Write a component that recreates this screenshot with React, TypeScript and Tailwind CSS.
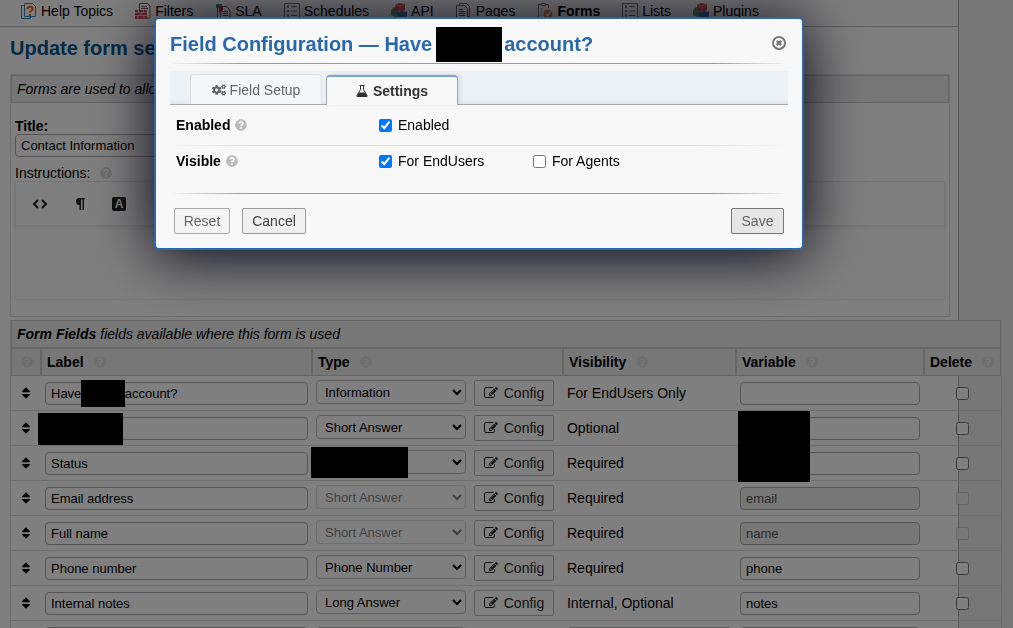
import type { ReactNode } from 'react'
import { FaCogs, FaQuestionCircle, FaSort } from 'react-icons/fa'

type Field = {
  label: string
  type: string
  visibility: string
  variable: string
  locked?: boolean
  hidden?: { label?: string; type?: string; variable?: string }
}

const fields: Field[] = [
  {
    label: 'Have            account?',
    type: 'Information',
    visibility: 'For EndUsers Only',
    variable: '',
    hidden: { label: 'left-10 top-1 h-[27px] w-11' },
  },
  {
    label: '',
    type: 'Short Answer',
    visibility: 'Optional',
    variable: '',
    hidden: { label: '-left-[3px] top-[2px] h-8 w-[85px]', variable: 'left-[2px] top-0 h-[71px] w-[72px]' },
  },
  { label: 'Status', type: '', visibility: 'Required', variable: '', hidden: { type: '-left-px top-px h-[31px] w-[97px]' } },
  { label: 'Email address', type: 'Short Answer', visibility: 'Required', variable: 'email', locked: true },
  { label: 'Full name', type: 'Short Answer', visibility: 'Required', variable: 'name', locked: true },
  { label: 'Phone number', type: 'Phone Number', visibility: 'Required', variable: 'phone' },
  { label: 'Internal notes', type: 'Long Answer', visibility: 'Internal, Optional', variable: 'notes' },
]

function TopicsIcon() {
  return (
    <svg width="16" height="18" viewBox="0 0 16 18" fill="none">
      <path d="M2.500 3.500h-2v13h9v-2M3.500 2.500v-1h8l3 3v10h-11z" stroke="#2a86b8" />
      <path d="M6.500 7c0-3 5-3 5 0 0 2-2.500 1.500-2.500 3.500" stroke="#e8601c" strokeWidth="2" />
      <path d="M8 12h2v2H8z" fill="#e8601c" />
    </svg>
  )
}

function FiltersIcon() {
  return (
    <svg width="16" height="18" viewBox="0 0 16 18" fill="none">
      <path d="M4.500 8V1.500h8l2.500 2.500v12h-3M6 4.500h6M6 6.500h7" stroke="#666" />
      <path d="M0 8h12v9H0z" fill="#d2415a" />
      <path d="M0 10.500h12M0 13.500h12M3.500 8v3M8.500 8v3M6 11v3M3 14v3M9 14v3" stroke="#fff" strokeOpacity=".6" />
    </svg>
  )
}

function SlaIcon() {
  return (
    <svg width="16" height="18" viewBox="0 0 16 18" fill="none">
      <path d="M1 2h6v4H1z" fill="#2e9a62" />
      <path d="M4 5.500h2M2.500 6v10h3M6.500 4.500h5l3.500 3.500v9H5.500v-12M8 9.500h5M8 11.500h5M8 13.500h5" stroke="#666" />
      <path d="M4 4h4v7l-2-2-2 2z" fill="#cc3048" />
    </svg>
  )
}

function ListIcon() {
  return (
    <svg width="16" height="18" viewBox="0 0 16 18" fill="none" stroke="#777">
      <path d="M.5 1.500h15v15H.5z" />
      <path d="M3 4.500h2M3 9h2M3 13.500h2" strokeWidth="2" />
      <path d="M7 4.500h6M7 9h6M7 13.500h6" />
    </svg>
  )
}

function BlocksIcon() {
  return (
    <svg width="16" height="18" viewBox="0 0 16 18">
      <path d="M0 8l3-3 4 2v7l-3 1-4-2z" fill="#5c9a6c" />
      <path d="M6 10l5-1 5 1v6l-4 1-6-1z" fill="#4c74aa" />
      <path d="M4 3l4-2 6 1v6l-4 2-6-2z" fill="#d84a50" />
      <path d="M4 3l5 1 5-2M9 4v6" stroke="#e98a8c" fill="none" />
    </svg>
  )
}

function PagesIcon() {
  return (
    <svg width="16" height="18" viewBox="0 0 16 18" fill="none" stroke="#666">
      <path d="M3.500 3.500V1.500h7l3 3v10h-2M.5 3.500h8l3 3v10H.5z" />
      <path d="M3 7.500h4M3 9.500h6M3 11.500h6M3 13.500h6" />
    </svg>
  )
}

function FormsIcon() {
  return (
    <svg width="16" height="18" viewBox="0 0 16 18" fill="none">
      <path d="M4 2.500H1.500v13H7M9 2.500h2.500V6M4.500 1.500h4v2h-4zM4 7h1M4 10h1M4 13h1" stroke="#777" />
      <circle cx="11" cy="12" r="4.500" fill="#e6823c" />
      <path d="M9 12l1.500 2L14 9" stroke="#fff" strokeWidth="1.500" />
    </svg>
  )
}

function EditIcon() {
  return (
    <svg width="14" height="14" viewBox="0 0 1792 1792" fill="currentColor">
      <path d="M888 1184l116-116-152-152-116 116v56h96v96h56zm440-720q-16-16-33 1l-350 350q-17 17-1 33t33-1l350-350q17-17 1-33zm80 594v190q0 119-84.500 203.500t-203.500 84.500h-832q-119 0-203.500-84.500t-84.500-203.500v-832q0-119 84.500-203.500t203.500-84.500h832q63 0 117 25 15 7 18 23 3 17-9 29l-49 49q-14 14-32 8-23-6-45-6h-832q-66 0-113 47t-47 113v832q0 66 47 113t113 47h832q66 0 113-47t47-113v-126q0-13 9-22l64-64q15-15 35-7t20 29zm-96-738l288 288-672 672h-288v-288zm444 132l-92 92-288-288 92-92q28-28 68-28t68 28l152 152q28 28 28 68t-28 68z" />
    </svg>
  )
}

function FlaskIcon() {
  return (
    <svg width="12" height="12" viewBox="0 0 12 12" fill="none">
      <path d="M3.500.5h5M4.500.5v4L1 10.500q-.5 1 .5 1h9q1 0 .5-1L7.500 4.500v-4" stroke="currentColor" />
      <path d="M3 7.500h6l2.500 4h-11z" fill="currentColor" />
    </svg>
  )
}

const navItems = [
  { name: 'Help Topics', icon: <TopicsIcon /> },
  { name: 'Filters', icon: <FiltersIcon /> },
  { name: 'SLA', icon: <SlaIcon /> },
  { name: 'Schedules', icon: <ListIcon /> },
  { name: 'API', icon: <BlocksIcon /> },
  { name: 'Pages', icon: <PagesIcon /> },
  { name: 'Forms', icon: <FormsIcon />, active: true },
  { name: 'Lists', icon: <ListIcon /> },
  { name: 'Plugins', icon: <BlocksIcon /> },
]

function Th({ children, className = 'pl-[5px]' }: { children?: ReactNode; className?: string }) {
  return (
    <th className={`h-7 border border-[#ccc] bg-[#eee] py-0 pr-0 text-left font-bold ${className}`}>
      <div className="flex items-center gap-[10px]">
        {children}
        <FaQuestionCircle className="size-3 text-[#ddd]" />
      </div>
    </th>
  )
}

function Redaction({ className }: { className: string }) {
  return <span className={`absolute z-10 bg-black ${className}`} />
}

const inputClass = 'h-[23px] w-full rounded-sm border border-[#aaa] bg-white px-[5px] text-[13px]'
const selectClass = 'h-6 rounded-sm border border-[#bbb] bg-white px-1 text-[13px]'

function FieldRow({ field }: { field: Field }) {
  return (
    <tr className="h-[35px] *:relative *:border-b *:border-[#ddd] *:px-1 *:py-0">
      <td>
        <FaSort className="mx-auto size-[14px]" />
      </td>
      <td>
        {field.hidden?.label && <Redaction className={field.hidden.label} />}
        <input aria-label="Label" defaultValue={field.label} className={inputClass} />
      </td>
      <td>
        {field.hidden?.type && <Redaction className={field.hidden.type} />}
        <div className="flex items-start gap-2">
          <select aria-label="Type" disabled={field.locked} className={`${selectClass} w-[150px] disabled:opacity-50`}>
            <option>{field.type}</option>
          </select>
          <button className="flex h-[26px] w-20 items-center justify-center gap-[6px] rounded-xs border border-[#bbb] text-[#222]">
            <EditIcon />
            Config
          </button>
        </div>
      </td>
      <td>{field.visibility}</td>
      <td>
        {field.hidden?.variable && <Redaction className={field.hidden.variable} />}
        <input
          aria-label="Variable"
          defaultValue={field.variable}
          disabled={field.locked}
          className={`${inputClass} disabled:bg-[#eee] disabled:text-[#555]`}
        />
      </td>
      <td>
        <input type="checkbox" aria-label="Delete" disabled={field.locked} className="mx-auto block size-[13px]" />
      </td>
    </tr>
  )
}

function FieldsTable() {
  return (
    <table className="w-full table-fixed border-separate border-spacing-0 border-x border-[#ddd]">
      <colgroup>
        <col className="w-[30px]" />
        <col />
        <col className="w-[251px]" />
        <col className="w-[173px]" />
        <col className="w-[188px]" />
        <col className="w-[77px]" />
      </colgroup>
      <thead>
        <tr>
          <th colSpan={6} className="h-7 border border-[#ccc] bg-[#eee] p-0 pl-[5px] text-left font-normal italic">
            <b>Form Fields</b> fields available where this form is used
          </th>
        </tr>
        <tr>
          <Th className="pl-[9px]" />
          <Th>Label</Th>
          <Th>Type</Th>
          <Th>Visibility</Th>
          <Th>Variable</Th>
          <Th>Delete</Th>
        </tr>
      </thead>
      <tbody>
        {fields.map((field, i) => (
          <FieldRow key={i} field={field} />
        ))}
        {/* blank row for adding a field */}
        <tr className="h-[35px] *:px-1 *:py-0">
          <td />
          <td>
            <input aria-label="New label" className={inputClass} />
          </td>
          <td>
            <select aria-label="New type" className={`${selectClass} w-[150px]`}>
              <option>Short Answer</option>
            </select>
          </td>
          <td>
            <select aria-label="New visibility" className={`${selectClass} w-full`}>
              <option>Optional</option>
            </select>
          </td>
          <td>
            <input aria-label="New variable" className={inputClass} />
          </td>
          <td />
        </tr>
      </tbody>
    </table>
  )
}

function FormPage() {
  return (
    <div className="mr-[54px] min-h-screen border-r border-[#aaa] bg-white">
      <nav className="flex h-[27px] items-center gap-[22px] border-b border-[#bbb] bg-[#fafafa] pb-1 pl-[21px]">
        {navItems.map((item) => (
          <a key={item.name} href="#" className={`flex items-center gap-1 whitespace-nowrap ${item.active ? 'font-bold' : ''}`}>
            {item.icon}
            {item.name}
          </a>
        ))}
      </nav>

      <main className="pr-2 pl-[10px]">
        <h2 className="flex h-[47px] items-center pb-[5px] text-xl font-bold text-[#0a568e]">Update form section</h2>

        <section className="border border-[#ddd]">
          <div className="flex h-7 items-center border border-[#ccc] bg-[#eee] pb-px pl-[5px] italic">
            Forms are used to allow for collection of custom data
          </div>
          <div className="px-1 pt-[15px] pb-4">
            <label htmlFor="title" className="block leading-4 font-bold">
              Title:
            </label>
            <input id="title" defaultValue="Contact Information" className="block h-[23px] w-80 rounded-sm border border-[#aaa] px-[5px] text-[13px]" />
            <div className="flex items-center gap-[10px] pt-2 leading-4">
              Instructions:
              <FaQuestionCircle className="size-3 text-[#ddd]" />
            </div>
            <div className="h-[119px] border border-[#eee]">
              <div className="flex h-[43px] items-center gap-6 pl-4 shadow-[0_2px_6px_#0000001a]">
                <button aria-label="HTML">
                  <svg width="16" height="16" viewBox="0 0 16 16" fill="none" stroke="#222" strokeWidth="2">
                    <path d="M6 4L2 8l4 4M10 4l4 4-4 4" />
                  </svg>
                </button>
                <button aria-label="Format">
                  <svg width="16" height="16" viewBox="0 0 16 16" fill="#222">
                    <path d="M13 2v1.500h-1V14h-1.500V3.500H9V14H7.500V9a3.500 3.500 0 010-7z" />
                  </svg>
                </button>
                <button aria-label="Text color">
                  <span className="flex size-[14px] items-center justify-center rounded-xs bg-[#222] text-xs font-bold text-white">A</span>
                </button>
              </div>
            </div>
          </div>
        </section>

        <div className="mt-[3px] -mr-[52px]">
          <FieldsTable />
        </div>
      </main>
    </div>
  )
}

const dialogButton = 'h-[26px] rounded-xs border pb-px text-sm'

function Divider({ light }: { light?: boolean }) {
  return (
    <div
      className={`h-px ${
        light
          ? 'bg-[linear-gradient(to_right,transparent,#ddd_12%,#ddd_85%,transparent)]'
          : 'bg-[linear-gradient(to_right,transparent,#999_12%,#999_88%,transparent)]'
      }`}
    />
  )
}

function Check({ label, checked }: { label: string; checked?: boolean }) {
  return (
    <label className="flex h-5 w-[154px] items-center gap-[6px]">
      <input type="checkbox" defaultChecked={checked} className="size-[13px]" />
      {label}
    </label>
  )
}

function SettingName({ children }: { children: string }) {
  return (
    <div className="flex h-5 w-[203px] items-center gap-[5px] font-bold">
      {children}
      <FaQuestionCircle className="size-3 text-[#bbb]" />
    </div>
  )
}

function ConfigDialog() {
  return (
    <div
      role="dialog"
      aria-labelledby="dialog-title"
      className="w-[650px] rounded-[5px] border-2 border-[#2a67ac] bg-[#f8f8f8] px-[14px] pt-2 pb-[14px] shadow-[0_5px_60px_#000011]"
    >
      <header className="flex h-9 items-start justify-between">
        <h3 id="dialog-title" className="flex h-[35px] text-xl leading-[34px] font-bold text-[#2a67ac]">
          Field Configuration — Have
          <span className="mr-[2px] ml-1 h-full w-[66px] bg-black" />
          account?
        </h3>
        <button aria-label="Close" className="mt-[9px] mr-[2px] text-[#777]">
          <svg width="14" height="14" viewBox="0 0 14 14" fill="none" stroke="currentColor" strokeWidth="2">
            <circle cx="7" cy="7" r="6" />
            <path d="M4.800 4.800l4.400 4.400M9.200 4.800L4.800 9.200" strokeWidth="2.500" />
          </svg>
        </button>
      </header>
      <Divider />

      <div role="tablist" className="mt-[7px] flex h-[34px] items-end gap-1 border-b border-[#aaa] bg-[linear-gradient(#edf2f7_85%,#e3e8ed)] pl-5">
        <button
          role="tab"
          aria-selected="false"
          className="flex h-[30px] w-[132px] items-center justify-center gap-1 rounded-t-[4px] border border-b-0 border-[#ddd] bg-[#f4f7fa] text-[#666]"
        >
          <FaCogs className="size-[14px]" />
          Field Setup
        </button>
        <button
          role="tab"
          aria-selected="true"
          className="-mb-px flex h-[30px] w-[132px] items-center justify-center gap-[5px] rounded-t-[4px] border border-t-2 border-b-0 border-[#aaa] border-t-[#7ba3d6] bg-[#f8f8f8] font-bold text-[#333] shadow-[2px_-1px_4px_#0000001a]"
        >
          <FlaskIcon />
          Settings
        </button>
      </div>

      <div className="flex h-10 items-center pl-[6px]">
        <SettingName>Enabled</SettingName>
        <Check label="Enabled" checked />
      </div>
      <Divider light />
      <div className="flex h-[47px] items-start pt-[5px] pl-[6px]">
        <SettingName>Visible</SettingName>
        <Check label="For EndUsers" checked />
        <Check label="For Agents" />
      </div>
      <Divider />

      <footer className="mt-[14px] flex gap-3 px-1">
        <button className={`${dialogButton} w-14 border-[#aaa] bg-[#f4f4f4] text-[#666]`}>Reset</button>
        <button className={`${dialogButton} w-16 border-[#999] bg-[#f0f0f0] text-[#444]`}>Cancel</button>
        <button className={`${dialogButton} ml-auto w-[53px] border-[#777] bg-[#e6e6e6] text-[#666]`}>Save</button>
      </footer>
    </div>
  )
}

export default function App() {
  return (
    <div className="h-screen overflow-hidden bg-[#eee] font-['Liberation_Sans',Arial,sans-serif] text-sm text-black">
      <FormPage />
      <div className="fixed inset-0 z-20 bg-black/50">
        <div className="mr-[55px] flex justify-center pt-[17px]">
          <ConfigDialog />
        </div>
      </div>
    </div>
  )
}
